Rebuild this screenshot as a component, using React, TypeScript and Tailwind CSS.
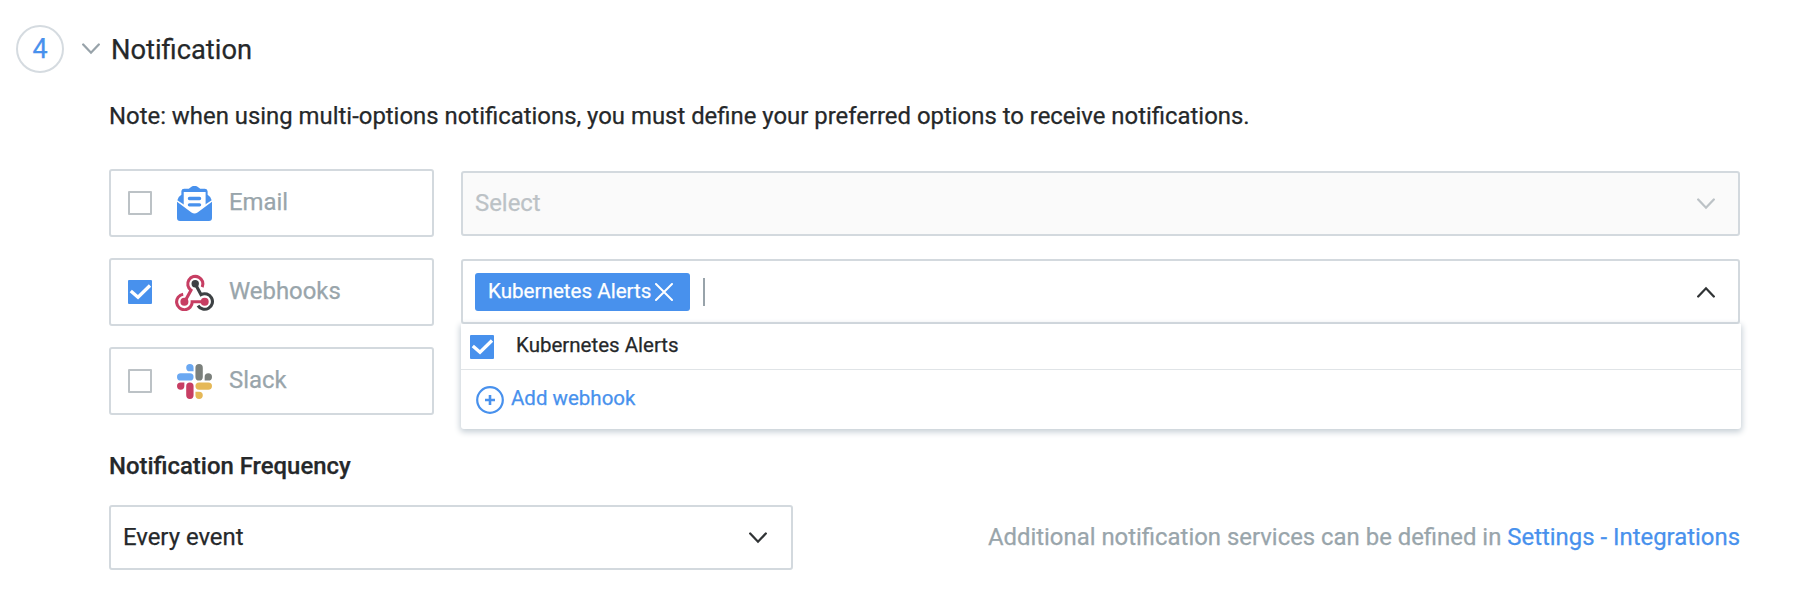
import React from "react";

const Chevron = ({ className }: { className: string }) => (
  <svg viewBox="0 0 18 12" className={className} fill="none" stroke="currentColor" strokeWidth="2.3">
    <path d="M1.2 1.5 L9 9.7 L16.8 1.5" strokeLinecap="round" />
  </svg>
);

const Checkbox = ({ checked }: { checked?: boolean }) =>
  checked ? (
    <span className="flex h-6 w-6 shrink-0 items-center justify-center rounded-[1px] bg-[#4891ed] text-white">
      <svg viewBox="0 0 24 24" className="h-6 w-6" fill="none" stroke="currentColor" strokeWidth="3.3">
        <path d="M2.8 11 L10 17.3 L22 5.5" />
      </svg>
    </span>
  ) : (
    <span className="h-6 w-6 shrink-0 rounded-[1px] border-2 border-[#bcc2c6] bg-white"></span>
  );

const EmailIcon = () => (
  <svg viewBox="0 0 104 104" className="h-[35px] w-[35px]">
    <path
      d="M1 42 Q3 32 13 26 L13 15 Q14 8 21 8 L35 8 L43 2 Q52 -3 61 2 L69 8 L83 8 Q91 9 91 16 L91 26 Q101 32 103 42 L84 55 L52 78 L20 55 Z"
      fill="#4891ed"
    />
    <path d="M20 18 H85 V57 L52 83 L20 57 Z" fill="#fff" />
    <path d="M37 37 H67 M37 56 H67" stroke="#4891ed" strokeWidth="10" strokeLinecap="round" />
    <path d="M0 47 L43 79 Q52 85 61 79 L104 47 V95 Q104 104 95 104 H9 Q0 104 0 95 Z" fill="#4891ed" />
  </svg>
);

const WebhookIcon = () => (
  <svg viewBox="10 11 39 37" className="h-[37px] w-[39px]" fill="none" strokeWidth="3.1">
    <path d="M37.2 24.2 A7.6 7.6 0 1 0 26 27.2 L19.8 38.6" stroke="#c73e63" />
    <path d="M18.2 31.2 A7.8 7.8 0 1 0 27.2 38.7 L39.5 38.7" stroke="#c73e63" />
    <path d="M33 42.6 A7.8 7.8 0 1 0 36 31.6 L30.3 21" stroke="#3d4144" />
    <circle cx="30.2" cy="20.7" r="3.7" fill="#3d4144" />
    <circle cx="19.4" cy="38.7" r="4" fill="#c73e63" />
    <circle cx="39.7" cy="38.7" r="4" fill="#c73e63" />
  </svg>
);

const SlackIcon = () => {
  const d =
    "M8.834 5.042a2.528 2.528 0 0 1-2.521-2.52A2.528 2.528 0 0 1 8.834 0a2.528 2.528 0 0 1 2.521 2.522v2.52H8.834zM8.834 6.313a2.528 2.528 0 0 1 2.521 2.521 2.528 2.528 0 0 1-2.521 2.521H2.522A2.528 2.528 0 0 1 0 8.834a2.528 2.528 0 0 1 2.522-2.521h6.312z";
  return (
    <svg viewBox="0 0 24 24" className="h-[35px] w-[35px]">
      <path d={d} fill="#6aa8f2" />
      <path d={d} fill="#7b807c" transform="rotate(90 12 12)" />
      <path d={d} fill="#e5b857" transform="rotate(180 12 12)" />
      <path d={d} fill="#c73e63" transform="rotate(270 12 12)" />
    </svg>
  );
};

const channels = [
  { name: "Email", icon: <EmailIcon />, checked: false },
  { name: "Webhooks", icon: <WebhookIcon />, checked: true },
  { name: "Slack", icon: <SlackIcon />, checked: false },
];

const App = () => {
  return (
    <div className="h-[606px] w-[1800px] overflow-hidden bg-white pt-[25px] pl-4 font-['Roboto',sans-serif] text-[23.9px] text-[#25282a] [-webkit-text-stroke:0.25px]">
      {/* Step header */}
      <div className="flex h-12 items-center">
        <div className="flex h-12 w-12 items-center justify-center rounded-full border-2 border-[#d5dbe0] text-[27px] text-[#4891ed]">
          4
        </div>
        <Chevron className="ml-[18px] h-3 w-[18px] text-[#98a3aa]" />
        <h1 className="ml-[11px] pt-[2px] text-[27.3px]">Notification</h1>
      </div>

      <div className="ml-[93px] w-[1631px]">
        <p className="mt-[27px] h-8 leading-8 whitespace-nowrap">
          Note: when using multi-options notifications, you must define your preferred options to receive
          notifications.
        </p>

        <div className="mt-[37px] flex gap-[27px]">
          {/* Channels */}
          <div className="flex w-[325px] flex-col gap-[21px]">
            {channels.map((c) => (
              <div
                key={c.name}
                className="flex h-[68px] items-center rounded-[3px] border-2 border-[#d3d9de] pl-[17px] text-[#99a5ab]"
              >
                <Checkbox checked={c.checked} />
                <span className="ml-[22px] flex w-[41px] justify-center">{c.icon}</span>
                <span className="ml-[14px]">{c.name}</span>
              </div>
            ))}
          </div>

          {/* Selects */}
          <div className="flex w-[1279px] flex-col pt-[2px]">
            <div className="flex h-[65px] items-center justify-between rounded-[3px] border-2 border-[#d3d9de] bg-[#fafafa] pr-[23px] pl-3 text-[#bcc2c6]">
              Select
              <Chevron className="h-3 w-[18px]" />
            </div>

            <div className="relative mt-[23px]">
              <div className="flex h-[65px] items-center rounded-[3px] border-2 border-[#d3d9de] pr-[23px] pl-3">
                <span className="flex h-[38px] w-[215px] items-center rounded-[3px] bg-[#4891ed] pl-[13px] text-[20.6px] whitespace-nowrap text-white">
                  Kubernetes Alerts
                  <svg viewBox="0 0 18 18" className="ml-1 h-[18px] w-[18px]" stroke="currentColor" strokeWidth="2">
                    <path d="M1 1 L17 17 M17 1 L1 17" strokeLinecap="round" />
                  </svg>
                </span>
                <span className="ml-[13px] h-7 w-[2px] bg-[#98a3aa]"></span>
                <Chevron className="ml-auto h-3 w-[18px] rotate-180 text-[#303335]" />
              </div>

              {/* Webhook menu */}
              <div className="absolute top-[65px] left-0 w-[1280px] rounded-b-[3px] bg-white text-[20.5px] shadow-[0_2px_6px_1px_#c5ced5]">
                <div className="flex h-[46px] items-center border-b border-[#e0e4e7] pl-[9px]">
                  <Checkbox checked />
                  <span className="ml-[22px] pb-[2px]">Kubernetes Alerts</span>
                </div>
                <div className="flex h-[59px] items-center pl-[15px] text-[#4891ed]">
                  <svg viewBox="0 0 28 28" className="h-7 w-7" fill="none" stroke="currentColor">
                    <circle cx="14" cy="14" r="12.8" strokeWidth="2.2" />
                    <path d="M14 9 V19 M9 14 H19" strokeWidth="2.6" />
                  </svg>
                  <span className="ml-[7px] pb-[2px]">Add webhook</span>
                </div>
              </div>
            </div>
          </div>
        </div>

        <h2 className="mt-[35px] h-8 leading-8 font-medium">Notification Frequency</h2>

        <div className="mt-[23px] flex items-center justify-between">
          <div className="flex h-[65px] w-[684px] items-center justify-between rounded-[3px] border-2 border-[#d3d9de] pr-6 pl-3">
            Every event
            <Chevron className="h-3 w-[18px] text-[#303335]" />
          </div>
          <p className="whitespace-nowrap text-[#99a5ab]">
            Additional notification services can be defined in{" "}
            <a href="#" className="text-[#4891ed]">
              Settings - Integrations
            </a>
          </p>
        </div>
      </div>
    </div>
  );
};

export default App;
